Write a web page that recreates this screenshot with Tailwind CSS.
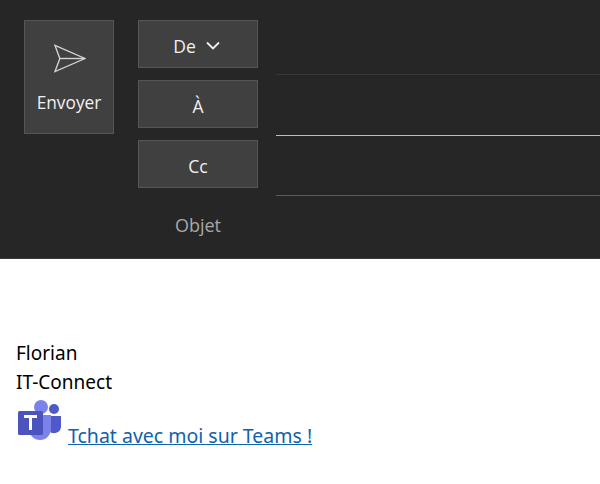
<!DOCTYPE html>
<html lang="fr">
<head>
<meta charset="utf-8">
<script src="https://cdn.jsdelivr.net/npm/@tailwindcss/browser@4"></script>
</head>
<body class="m-0 h-[484px] w-[600px] overflow-hidden bg-white font-['Open_Sans',sans-serif]">
<header class="flex h-[259px] border-b border-[#3a3a3a] bg-[#262626] pl-6 pt-5">
  <button class="flex h-[114px] w-[90px] flex-col items-center rounded-none border border-[#555] bg-[#404040] pt-[23px] text-[17.300px] text-[#f0f0f0]">
    <svg class="h-[29px] w-[33px]" viewBox="0 0 34 30" fill="none" stroke="#d4d4d4" stroke-width="1.4" stroke-linejoin="miter"><path d="M2 1.500 33 15 2 28.500 7 15Z"/><path d="M7 15H33"/></svg>
    <span class="mt-[20px] leading-5">Envoyer</span>
  </button>
  <div class="ml-6 flex w-[120px] flex-col gap-3">
    <button class="flex h-12 items-center justify-center gap-[10px] border border-[#555] bg-[#404040] pr-[3px] pt-[4px] text-[17.500px] leading-5 text-[#f0f0f0]">De
      <svg class="mb-[2px] h-[9px] w-[14px]" viewBox="0 0 14 9" fill="none" stroke="#f0f0f0" stroke-width="1.8"><path d="M1 1.500 7 7.500 13 1.500"/></svg>
    </button>
    <button class="flex h-12 items-center justify-center border border-[#555] bg-[#404040] pt-[4px] text-[17.500px] leading-5 text-[#f0f0f0]">À</button>
    <button class="flex h-12 items-center justify-center border border-[#555] bg-[#404040] pt-[4px] text-[17.500px] leading-5 text-[#f0f0f0]">Cc</button>
    <span class="mt-[15px] text-center text-[18px] leading-5 text-[#a8a8a8]">Objet</span>
  </div>
  <div class="ml-[18px] flex flex-1 flex-col">
    <div class="h-[55px] border-b border-[#383838]"></div>
    <div class="h-[61px] border-b border-[#b4c0cc]"></div>
    <div class="h-[60px] border-b border-[#5a5a5a]"></div>
  </div>
</header>
<main class="pl-4 pt-[80px] font-['Noto_Sans',sans-serif] text-[19px] leading-[29px] text-black">
  <p>Florian</p>
  <p>IT-Connect</p>
  <p class="relative h-[56px]">
    <svg class="absolute left-0 top-[3px] h-[44px] w-[46px]" viewBox="0 0 46 44">
      <circle cx="38" cy="9" r="5" fill="#5059c9"/>
      <path d="M33 16h12v11a7 7 0 0 1-12 4Z" fill="#5059c9"/>
      <circle cx="25" cy="7" r="7" fill="#7b83eb"/>
      <path d="M13 15h22v14a11 11 0 0 1-22 0Z" fill="#7b83eb"/>
      <rect x="2" y="11" width="25" height="24" rx="1.500" fill="#4b53bc"/>
      <path d="M8 16.500h13M14.500 16.500V30" stroke="#fff" stroke-width="3" fill="none"/>
    </svg>
    <a href="#" class="absolute left-[52px] top-[24px] whitespace-nowrap text-[19.500px] text-[#0f62ab] underline">Tchat avec moi sur Teams !</a>
  </p>
</main>
</body>
</html>
